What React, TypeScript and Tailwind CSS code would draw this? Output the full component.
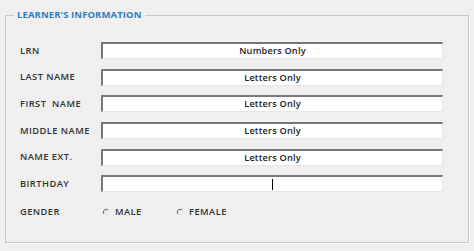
const fields = [
  { label: "LRN", hint: "Numbers Only" },
  { label: "LAST NAME", hint: "Letters Only" },
  { label: "FIRST\u00a0 NAME", hint: "Letters Only" },
  { label: "MIDDLE NAME", hint: "Letters Only" },
  { label: "NAME EXT.", hint: "Letters Only" },
];

const font = { fontFamily: '"Open Sans", "Liberation Sans", sans-serif' };

const Radio = () => (
  <svg width="8" height="8" viewBox="0 0 8 8" className="shrink-0">
    <circle cx="4" cy="4" r="3" fill="none" stroke="#e6e6e6" strokeWidth="0.8" />
    <path d="M1.9 6.1 A3 3 0 0 1 6.1 1.9" fill="none" stroke="#555" strokeWidth="0.9" />
  </svg>
);

const Box = ({ children }: { children?: React.ReactNode }) => (
  <div className="h-[17px] w-[342px] bg-white border-t-2 border-l-2 border-r border-b border-t-[#777] border-l-[#777] border-r-[#e6e6e6] border-b-[#e6e6e6] flex items-center justify-center text-[9.2px] tracking-[0.2px] font-semibold text-[#222]">
    {children}
  </div>
);

export default function App() {
  return (
    <div className="w-[474px] h-[251px] bg-[#efefef] pt-[9px] pl-[5px]" style={font}>
      <fieldset className="w-[464px] border border-[#c6c6c6] shadow-[1px_1px_0_#fafafa] pl-[14px] pt-[21px] pb-[23px] m-0">
        <legend className="-ml-[6px] px-[3px] text-[9.5px] leading-[12px] font-bold text-[#2f7dbf] tracking-[0.1px]">
          LEARNER'S INFORMATION
        </legend>
        <div className="flex flex-col gap-[9.7px] text-[9.3px] tracking-[0.45px] font-semibold text-[#333]">
          {fields.map((f) => (
            <div key={f.label} className="flex items-center h-[17px]">
              <span className="w-[81px] whitespace-nowrap">{f.label}</span>
              <Box>{f.hint}</Box>
            </div>
          ))}
          <div className="flex items-center h-[17px]">
            <span className="w-[81px]">BIRTHDAY</span>
            <Box>
              <span className="w-px h-[11px] bg-black" />
            </Box>
          </div>
          <div className="flex items-center h-[17px] pt-[2px]">
            <span className="w-[82px]">GENDER</span>
            <label className="flex items-center gap-[5px] w-[74px]">
              <Radio />
              MALE
            </label>
            <label className="flex items-center gap-[5px]">
              <Radio />
              FEMALE
            </label>
          </div>
        </div>
      </fieldset>
    </div>
  );
}
